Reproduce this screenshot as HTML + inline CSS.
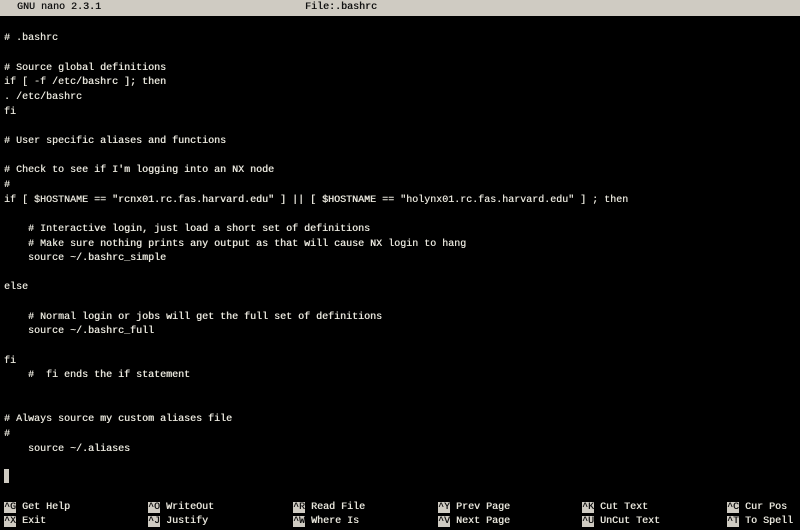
<!DOCTYPE html>
<html><head><style>
html,body{margin:0;padding:0;background:#000;width:800px;height:529px;overflow:hidden}
.t{position:absolute;left:0;top:0;width:800px;height:16px;background:#cfcbc2}
pre{position:absolute;margin:0;font-family:"Liberation Mono",monospace;font-size:10px;line-height:14.65px;color:#e6e4da;white-space:pre;text-shadow:0.3px 0 0 currentColor}
.k{background:#cfcbc2;color:#111}
.cur{position:absolute;left:4px;top:469px;width:5px;height:14px;background:#cfcbc2}
</style></head><body>
<div class="t"></div>
<pre style="left:5px;top:1px;color:#111">  GNU nano 2.3.1                                  File:.bashrc</pre>
<pre style="left:4px;top:3px">


# .bashrc

# Source global definitions
if [ -f /etc/bashrc ]; then
. /etc/bashrc
fi

# User specific aliases and functions

# Check to see if I'm logging into an NX node
#
if [ $HOSTNAME == "rcnx01.rc.fas.harvard.edu" ] || [ $HOSTNAME == "holynx01.rc.fas.harvard.edu" ] ; then

    # Interactive login, just load a short set of definitions
    # Make sure nothing prints any output as that will cause NX login to hang
    source ~/.bashrc_simple

else

    # Normal login or jobs will get the full set of definitions
    source ~/.bashrc_full

fi
    #  fi ends the if statement


# Always source my custom aliases file
#
    source ~/.aliases
</pre>
<div class="cur"></div>
<pre style="left:4px;top:501px"><span class="k">^G</span> Get Help</pre>
<pre style="left:4px;top:515px"><span class="k">^X</span> Exit</pre>
<pre style="left:148px;top:501px"><span class="k">^O</span> WriteOut</pre>
<pre style="left:148px;top:515px"><span class="k">^J</span> Justify</pre>
<pre style="left:293px;top:501px"><span class="k">^R</span> Read File</pre>
<pre style="left:293px;top:515px"><span class="k">^W</span> Where Is</pre>
<pre style="left:438px;top:501px"><span class="k">^Y</span> Prev Page</pre>
<pre style="left:438px;top:515px"><span class="k">^V</span> Next Page</pre>
<pre style="left:582px;top:501px"><span class="k">^K</span> Cut Text</pre>
<pre style="left:582px;top:515px"><span class="k">^U</span> UnCut Text</pre>
<pre style="left:727px;top:501px"><span class="k">^C</span> Cur Pos</pre>
<pre style="left:727px;top:515px"><span class="k">^T</span> To Spell</pre>
</body></html>
